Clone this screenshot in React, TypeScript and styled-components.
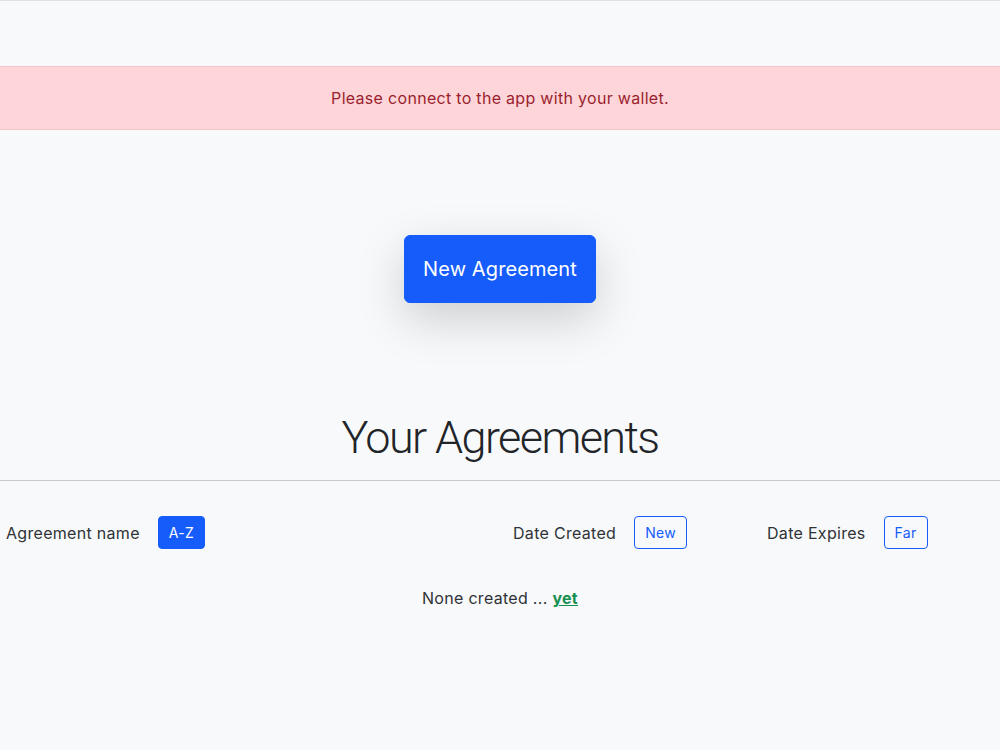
import styled, {createGlobalStyle} from 'styled-components';

const GlobalStyle = createGlobalStyle`
  html, body {
    margin: 0;
    padding: 0;
    background: #f8f9fa;
    color: #212529;
    font-family: Inter, "Noto Sans", "Liberation Sans", sans-serif;
    font-size: 16px;
    line-height: 24px;
    letter-spacing: 0.3px;
  }
`;

const Page = styled.div`
  min-height: 750px;
  border-top: 1px solid #dee2e6;
  box-sizing: border-box;
`;

const Alert = styled.div`
  margin-top: 65px;
  padding: 19px 16px;
  background: #fed5d9;
  border-top: 1px solid #f7c4c9;
  border-bottom: 1px solid #f7c4c9;
  color: #9a1f2e;
  text-align: center;
`;

const Hero = styled.div`
  display: flex;
  justify-content: center;
  padding-top: 105px;
`;

const BigButton = styled.button`
  font-family: inherit;
  font-size: 20px;
  line-height: 30px;
  letter-spacing: 0.1px;
  padding: 18px 18px;
  color: #fff;
  background: #155cfb;
  border: 1px solid #155cfb;
  border-radius: 6px;
  box-shadow: 0 16px 48px rgba(0, 0, 0, 0.175);
  cursor: pointer;
`;

const Title = styled.h1`
  margin: 107px 0 0;
  font-family: Roboto, Inter, sans-serif;
  font-size: 45px;
  line-height: 56px;
  font-weight: 300;
  letter-spacing: -1.6px;
  text-align: center;
`;

const Rule = styled.hr`
  margin: 14px 0 0;
  border: 0;
  border-top: 1px solid #c8c9ca;
`;

const SortRow = styled.div`
  display: grid;
  grid-template-columns: 507px 254px 1fr;
  padding-left: 6px;
  margin-top: 35px;
  color: #2f3337;
`;

const SortCell = styled.div`
  display: flex;
  align-items: center;
  gap: 18px;
`;

const SortButton = styled.button<{ $active?: boolean }>`
  font-family: inherit;
  font-size: 14px;
  line-height: 21px;
  letter-spacing: 0.3px;
  padding: 5px 10px;
  border-radius: 4px;
  border: 1px solid #155cfb;
  background: ${p => (p.$active ? '#155cfb' : 'transparent')};
  color: ${p => (p.$active ? '#fff' : '#155cfb')};
  cursor: pointer;
`;

const Empty = styled.p`
  margin: 37px 0 0;
  text-align: center;
  color: #2f3337;

  a {
    color: #16904f;
    font-weight: 700;
    text-decoration: underline;
  }
`;

const sorts = [
    {label: 'Agreement name', button: 'A-Z', active: true},
    {label: 'Date Created', button: 'New', active: false},
    {label: 'Date Expires', button: 'Far', active: false},
];

export default function App() {
    return (
        <>
            <GlobalStyle/>
            <Page>
                <Alert>Please connect to the app with your wallet.</Alert>
                <Hero>
                    <BigButton>New Agreement</BigButton>
                </Hero>
                <Title>Your Agreements</Title>
                <Rule/>
                <SortRow>
                    {sorts.map(s => (
                        <SortCell key={s.label}>
                            {s.label}
                            <SortButton $active={s.active}>{s.button}</SortButton>
                        </SortCell>
                    ))}
                </SortRow>
                <Empty>None created ... <a href="#">yet</a></Empty>
            </Page>
        </>
    );
}
